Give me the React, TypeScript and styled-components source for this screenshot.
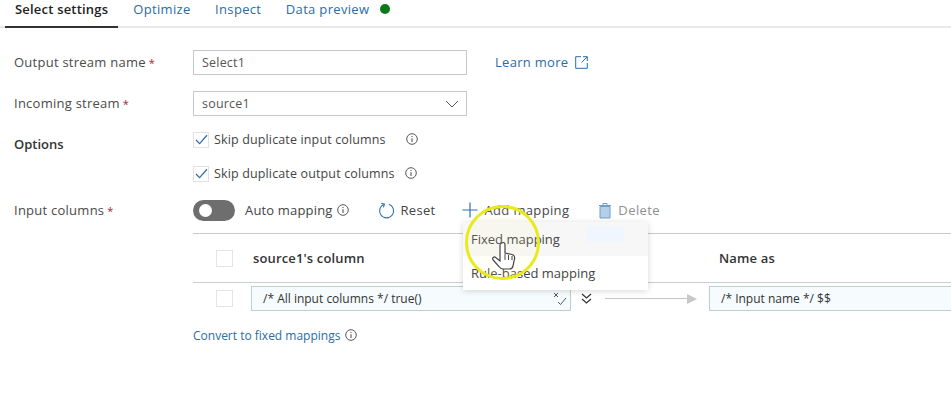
import React from 'react';
import styled, { createGlobalStyle } from 'styled-components';

const GlobalStyle = createGlobalStyle`
  html, body {
    margin: 0;
    padding: 0;
    background: #fff;
    overflow: hidden;
  }
  body {
    font-family: "Open Sans", "Noto Sans", sans-serif;
    font-size: 13px;
    color: #444;
  }
`;

const Page = styled.div`
  position: relative;
  width: 951px;
  height: 400px;
  overflow: hidden;
`;

const Tabs = styled.div`
  display: flex;
  align-items: flex-start;
  height: 26px;
  padding-left: 5px;
  border-bottom: 2px solid #e9e9e9;
`;

const Tab = styled.div<{ $active?: boolean }>`
  height: 26px;
  box-sizing: content-box;
  padding: 0 10px;
  margin-right: ${p => (p.$active ? 5 : 4.5)}px;
  line-height: 18px;
  font-size: 13px;
  letter-spacing: ${p => (p.$active ? '0.2px' : '0.33px')};
  color: ${p => (p.$active ? '#222' : '#2b6ca3')};
  font-weight: ${p => (p.$active ? 600 : 400)};
  border-bottom: 2px solid ${p => (p.$active ? '#333' : 'transparent')};
  display: flex;
  gap: 11px;
`;

const StatusDot = styled.span`
  width: 10px;
  height: 10px;
  margin-top: 4px;
  border-radius: 50%;
  background: #0b7a1a;
`;

const Form = styled.div`
  padding: 22px 0 0 14px;
`;

const Row = styled.div<{ $mb: number }>`
  display: grid;
  grid-template-columns: 179px 1fr;
  align-items: start;
  margin-bottom: ${p => p.$mb}px;
`;

const Label = styled.div`
  font-size: 13px;
  letter-spacing: 0.25px;
  color: #4a4a4a;
  line-height: 24px;
`;

const OptionsLabel = styled.div`
  font-size: 13px;
  font-weight: 600;
  color: #333;
  line-height: 26px;
`;

const Required = styled.span`
  color: #a4262c;
  font-size: 11px;
  margin-left: 3px;
`;

const FieldLine = styled.div`
  display: flex;
  align-items: center;
`;

const Input = styled.div`
  box-sizing: border-box;
  width: 274px;
  height: 25px;
  border: 1px solid #c8c8c8;
  padding-left: 8px;
  line-height: 23px;
  font-size: 12.5px;
  letter-spacing: 0.2px;
  color: #555;
  display: flex;
  justify-content: space-between;
  align-items: center;
`;

const LearnMore = styled.a`
  margin-left: 28px;
  margin-top: -1px;
  color: #2b6ca3;
  font-size: 13px;
  letter-spacing: 0.3px;
  display: flex;
  align-items: center;
  gap: 7px;
`;

const CheckLine = styled.div`
  display: flex;
  align-items: center;
  height: 17px;
  margin-bottom: 17px;
  &:last-child {
    margin-bottom: 0;
  }
`;

const Check = styled.span`
  box-sizing: border-box;
  width: 16px;
  height: 16px;
  border: 1px solid #e2e2e2;
  margin-right: 5px;
  display: flex;
  align-items: center;
  justify-content: center;
`;

const CheckText = styled.span`
  font-size: 12.5px;
  letter-spacing: 0.14px;
  color: #444;
`;

const InfoWrap = styled.span<{ $ml: number; $up?: number }>`
  display: inline-flex;
  margin-left: ${p => p.$ml}px;
  margin-top: ${p => p.$up ?? 0}px;
`;

const Toolbar = styled.div`
  display: flex;
  align-items: center;
  height: 24px;
`;

const Toggle = styled.span`
  position: relative;
  width: 42px;
  height: 21px;
  border-radius: 11px;
  background: #6e6e6e;
  margin-right: 10px;
  &::after {
    content: '';
    position: absolute;
    left: 6px;
    top: 4px;
    width: 13px;
    height: 13px;
    border-radius: 50%;
    background: #fff;
  }
`;

const ToolText = styled.span<{ $muted?: boolean; $ls?: number }>`
  font-size: 13px;
  letter-spacing: ${p => p.$ls ?? 0.2}px;
  color: ${p => (p.$muted ? '#8f8f8f' : '#444')};
`;

const ToolButton = styled.span<{ $ml: number; $gap: number }>`
  display: flex;
  align-items: center;
  margin-left: ${p => p.$ml}px;
  gap: ${p => p.$gap}px;
`;

const Table = styled.div`
  margin: 10px 0 0 193px;
  border-top: 1px solid #c9c9c9;
`;

const HeaderRow = styled.div`
  display: flex;
  align-items: center;
  height: 48px;
  border-bottom: 1px solid #c9cdcd;
  padding-left: 23px;
`;

const Box = styled.span`
  box-sizing: border-box;
  width: 17px;
  height: 17px;
  border: 1px solid #e4e4e4;
  flex: none;
`;

const HeaderText = styled.span<{ $w?: number; $ml?: number }>`
  font-weight: 600;
  font-size: 13px;
  color: #333;
  letter-spacing: 0.15px;
  width: ${p => p.$w ?? 100}px;
  margin-left: ${p => p.$ml ?? 0}px;
`;

const BodyRow = styled.div`
  display: flex;
  align-items: center;
  height: 25px;
  margin-top: 3px;
  padding-left: 23px;
`;

const Expr = styled.div<{ $w: number; $ml?: number }>`
  box-sizing: border-box;
  width: ${p => p.$w}px;
  height: 25px;
  margin-left: ${p => p.$ml ?? 0}px;
  flex: none;
  display: flex;
  align-items: center;
  justify-content: space-between;
  padding: 0 3px 0 11px;
  border: 1px solid #bcd0d2;
  background: #f6fbfd;
  font-size: 12px;
  color: #333;
`;

const Connector = styled.div`
  display: flex;
  align-items: center;
  width: 138px;
  flex: none;
  padding-left: 10px;
  box-sizing: border-box;
`;

const ArrowLine = styled.span`
  width: 82px;
  height: 1px;
  background: #c4c4c4;
  margin-left: 13px;
`;

const ArrowHead = styled.span`
  width: 0;
  height: 0;
  border-left: 10px solid #c8c8c8;
  border-top: 5px solid transparent;
  border-bottom: 5px solid transparent;
`;

const ConvertLink = styled.a`
  display: flex;
  align-items: center;
  margin: 15px 0 0 193px;
  font-size: 12px;
  color: #2b6ca3;
  height: 18px;
`;

const Menu = styled.div`
  position: absolute;
  left: 463px;
  top: 222px;
  width: 185px;
  height: 68px;
  background: #fff;
  box-shadow: 0 1px 6px rgba(0, 0, 0, 0.16);
  border-radius: 2px;
`;

const MenuItem = styled.div<{ $hover?: boolean }>`
  height: 34px;
  line-height: 34px;
  padding-left: 8px;
  font-size: 13px;
  color: #444;
  background: ${p => (p.$hover ? '#f7f7f7' : '#fff')};
`;

const MenuGlow = styled.span`
  position: absolute;
  left: 124px;
  top: 4px;
  width: 37px;
  height: 16px;
  background: #eff6fd;
`;

const Spotlight = styled.span`
  position: absolute;
  left: 465px;
  top: 205px;
  width: 75px;
  height: 75px;
  box-sizing: border-box;
  border: 3px solid #e9ea1c;
  border-radius: 50%;
  background: rgba(255, 255, 190, 0.1);
  z-index: 2;
`;

const Pointer = styled.svg`
  position: absolute;
  left: 491px;
  top: 241px;
  z-index: 3;
`;

const Info = ({ size = 12 }: { size?: number }) => (
  <svg width={size} height={size} viewBox="0 0 12 12" fill="none">
    <circle cx="6" cy="6" r="5.3" stroke="#444" strokeWidth="0.9" />
    <path d="M6 3v1M6 5.2V9" stroke="#444" strokeWidth="1" />
  </svg>
);

const Tick = () => (
  <svg width="13" height="11" viewBox="0 0 13 11" fill="none">
    <path d="M1 6l3.6 3.6L12 1.2" stroke="#2f6fb0" strokeWidth="1.3" />
  </svg>
);

const App: React.FC = () => (
  <Page>
    <GlobalStyle />
    <Tabs>
      <Tab $active>Select settings</Tab>
      <Tab>Optimize</Tab>
      <Tab>Inspect</Tab>
      <Tab>
        Data preview
        <StatusDot />
      </Tab>
    </Tabs>
    <Form>
      <Row $mb={16}>
        <Label>
          Output stream name<Required>*</Required>
        </Label>
        <FieldLine>
          <Input>Select1</Input>
          <LearnMore>
            Learn more
            <svg width="13" height="13" viewBox="0 0 13 13" fill="none">
              <path d="M6 .7H.7v11.6h11.6V7M8 .7h4.3V5M12 1L6.5 6.5" stroke="#2b6ca3" strokeWidth="1" />
            </svg>
          </LearnMore>
        </FieldLine>
      </Row>
      <Row $mb={15}>
        <Label>
          Incoming stream<Required>*</Required>
        </Label>
        <FieldLine>
          <Input>
            source1
            <svg width="14" height="8" viewBox="0 0 14 8" fill="none" style={{ marginRight: 7 }}>
              <path d="M1 1l6 6 6-6" stroke="#555" strokeWidth="1" />
            </svg>
          </Input>
        </FieldLine>
      </Row>
      <Row $mb={16}>
        <OptionsLabel>Options</OptionsLabel>
        <div>
          <CheckLine>
            <Check>
              <Tick />
            </Check>
            <CheckText>Skip duplicate input columns</CheckText>
            <InfoWrap $ml={20} $up={-2}>
              <Info />
            </InfoWrap>
          </CheckLine>
          <CheckLine>
            <Check>
              <Tick />
            </Check>
            <CheckText>Skip duplicate output columns</CheckText>
            <InfoWrap $ml={10} $up={-2}>
              <Info />
            </InfoWrap>
          </CheckLine>
        </div>
      </Row>
      <Row $mb={0}>
        <Label>
          Input columns<Required>*</Required>
        </Label>
        <Toolbar>
          <Toggle />
          <ToolText $ls={0.17}>Auto mapping</ToolText>
          <InfoWrap $ml={4}>
            <Info />
          </InfoWrap>
          <ToolButton $ml={29} $gap={6}>
            <svg width="17" height="17" viewBox="0 0 17 17" fill="none">
              <path d="M6.4 2.2a7 7 0 1 0 4.4 0" stroke="#2f6fb0" strokeWidth="1.1" />
              <path d="M3.2 1.2l3.2 1-1 3.2" stroke="#2f6fb0" strokeWidth="1.1" />
            </svg>
            <ToolText $ls={0.3}>Reset</ToolText>
          </ToolButton>
          <ToolButton $ml={26} $gap={7}>
            <svg width="16" height="16" viewBox="0 0 16 16" fill="none">
              <path d="M8 .5v15M.5 8h15" stroke="#2f6fb0" strokeWidth="1.2" />
            </svg>
            <ToolText $ls={0.35}>Add mapping</ToolText>
          </ToolButton>
          <ToolButton $ml={29} $gap={6}>
            <svg width="14" height="17" viewBox="0 0 14 17" fill="none">
              <path d="M2 4.5h10v11.5H2z" fill="#b5cfe8" stroke="#6f9fcf" />
              <path d="M1 3.5h12M5 3.5V1.5h4v2" stroke="#6f9fcf" />
            </svg>
            <ToolText $muted $ls={0.4}>Delete</ToolText>
          </ToolButton>
        </Toolbar>
      </Row>
    </Form>
    <Table>
      <HeaderRow>
        <Box />
        <HeaderText $w={466} $ml={20}>source1's column</HeaderText>
        <HeaderText>Name as</HeaderText>
      </HeaderRow>
      <BodyRow>
        <Box />
        <Expr $w={320} $ml={18}>
          /* All input columns */ true()
          <svg width="14" height="14" viewBox="0 0 14 14" fill="none">
            <path d="M1 1l4 4M5 1L1 5M5 10l2.5 2.5L13 6" stroke="#555" strokeWidth="1" />
          </svg>
        </Expr>
        <Connector>
          <svg width="11" height="11" viewBox="0 0 11 11" fill="none">
            <path d="M1 1l4.5 4 4.5-4M1 6l4.5 4 4.5-4" stroke="#333" strokeWidth="1.2" />
          </svg>
          <ArrowLine />
          <ArrowHead />
        </Connector>
        <Expr $w={260}>/* Input name */ $$</Expr>
      </BodyRow>
    </Table>
    <ConvertLink>
      Convert to fixed mappings
      <InfoWrap $ml={5}>
        <Info />
      </InfoWrap>
    </ConvertLink>
    <Menu>
      <MenuGlow />
      <MenuItem $hover>Fixed mapping</MenuItem>
      <MenuItem>Rule-based mapping</MenuItem>
    </Menu>
    <Spotlight />
    <Pointer width="26" height="30" viewBox="0 0 26 30" fill="none">
      <path
        d="M11 2c1.5-1.2 3 0 3 1.5V12l7 1.5c2 .6 3 1.5 2.6 4L22 25c-.4 2-1.5 3-3.5 3H12c-2 0-3-1-4-2.5L2.2 19c-1.5-2 .8-4 2.5-2.5L9 20V4c0-1 1-1.8 2-2z"
        fill="#fff"
        stroke="#444"
        strokeWidth="1.2"
      />
      <path d="M14 13v6M17.5 14v5M21 15v4" stroke="#444" strokeWidth="1" />
    </Pointer>
  </Page>
);

export default App;
